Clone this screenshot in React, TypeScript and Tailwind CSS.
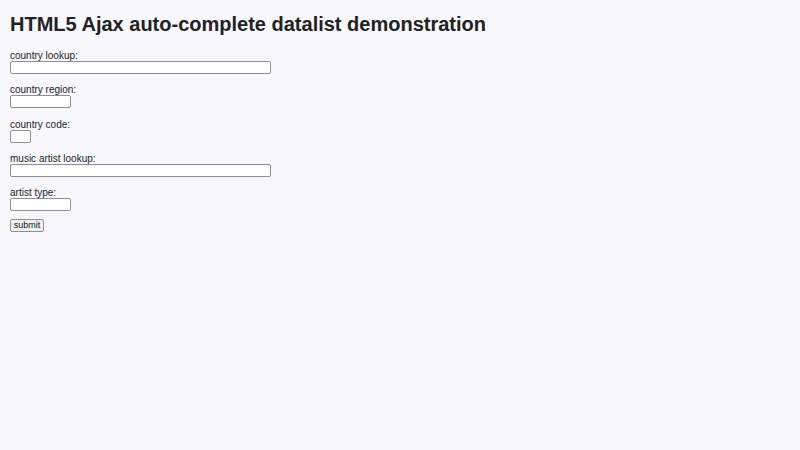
import React from 'react';

const fields = [
  { label: 'country lookup:', width: 'w-[261px]' },
  { label: 'country region:', width: 'w-[61px]' },
  { label: 'country code:', width: 'w-[21px]' },
  { label: 'music artist lookup:', width: 'w-[261px]' },
  { label: 'artist type:', width: 'w-[61px]' },
];

export default function App() {
  return (
    <div className="min-h-screen bg-[#f8f8fc] px-[10px] pt-[12px] font-['Liberation_Sans',Arial,sans-serif] text-[#222]">
      <h1 className="text-[20px] font-bold leading-[24px] mb-[14px]">
        HTML5 Ajax auto-complete datalist demonstration
      </h1>
      <form onSubmit={(e) => e.preventDefault()}>
        {fields.map((f) => (
          <div key={f.label} className="mb-[10.25px]">
            <label className="block text-[10px] leading-[11px]">{f.label}</label>
            <input
              type="text"
              className={`block h-[13px] ${f.width} border border-[#8f8f8f] bg-white rounded-[2px] text-[10px]`}
            />
          </div>
        ))}
        <button
          type="submit"
          className="block -mt-[2px] h-[13px] w-[34px] border border-[#8f8f8f] bg-[#efefef] rounded-[2px] text-[9px] leading-[11px] text-[#111]"
        >
          submit
        </button>
      </form>
    </div>
  );
}
